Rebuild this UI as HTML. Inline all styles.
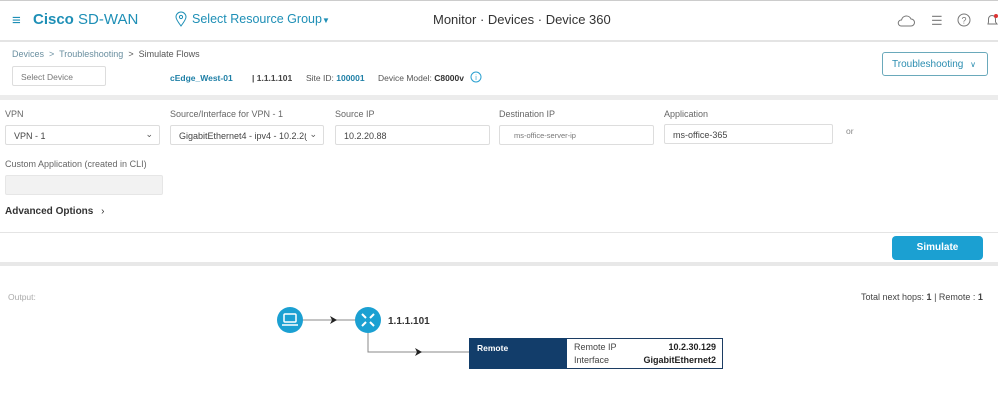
<!DOCTYPE html>
<html><head><style>
*{box-sizing:border-box;margin:0;padding:0}
body{width:998px;height:410px;background:#fff;font-family:"Liberation Sans",sans-serif;position:relative;overflow:hidden;color:#333}
.a{position:absolute;white-space:nowrap}
.lbl{font-size:9px;color:#666}
.inp{position:absolute;height:20px;border:1px solid #ddd;border-radius:2px;font-size:9px;color:#444;padding:5px 8px;background:#fff}
.chev{position:absolute;right:6px;top:3px;font-size:9px;color:#555}
</style></head><body>
<div class="a" style="left:0;top:0;width:998px;height:1px;background:#ccc"></div>
<div class="a" style="left:12px;top:12px;font-size:15px;color:#1e8fb6">≡</div>
<div class="a" style="left:33px;top:11px;font-size:15px;color:#1e8fb6"><b>Cisco</b> SD-WAN</div>
<svg class="a" style="left:175px;top:11px" width="12" height="16" viewBox="0 0 12 16"><path d="M6 15C3 11 1 8 1 6a5 5 0 0 1 10 0c0 2-2 5-5 9z" fill="none" stroke="#1e8fb6" stroke-width="1"/><circle cx="6" cy="6" r="1.6" fill="none" stroke="#1e8fb6"/></svg>
<div class="a" style="left:192px;top:12px;font-size:12.5px;color:#1e8fb6">Select Resource Group<span style="font-size:8px">▼</span></div>
<div class="a" style="left:433px;top:12px;font-size:13px;color:#333">Monitor · Devices · Device 360</div>
<svg class="a" style="left:897px;top:14px" width="18" height="13" viewBox="0 0 18 13"><path d="M4 12h10a3.5 3.5 0 0 0 0-7 5 5 0 0 0-9.5 1A3 3 0 0 0 4 12z" fill="none" stroke="#777" stroke-width="1"/></svg>
<div class="a" style="left:931px;top:13px;font-size:13px;color:#888">☰</div>
<svg class="a" style="left:957px;top:13px" width="14" height="14"><circle cx="7" cy="7" r="6" fill="none" stroke="#777"/><text x="7" y="10.5" font-size="9" text-anchor="middle" fill="#777" font-family="Liberation Sans">?</text></svg>
<svg class="a" style="left:986px;top:13px" width="12" height="15"><path d="M2 11h9L9.5 9V6a3.5 3.5 0 0 0-7 0v3z" fill="none" stroke="#777"/><circle cx="10" cy="3" r="2" fill="#d33"/></svg>
<div class="a" style="left:0;top:40px;width:998px;height:2px;background:#e4e4e4"></div>
<div class="a" style="left:12px;top:49px;font-size:9px;color:#6a8fa0">Devices &nbsp;&gt;&nbsp; Troubleshooting &nbsp;<span style="color:#555">&gt;&nbsp; Simulate Flows</span></div>
<div class="inp" style="left:12px;top:66px;width:94px;font-size:8.5px;color:#777">Select Device</div>
<div class="a" style="left:170px;top:73px;font-size:8.5px;color:#1e7fa6;font-weight:bold">cEdge_West-01</div>
<div class="a" style="left:252px;top:73px;font-size:8.5px;color:#444"><b>| 1.1.1.101</b></div>
<div class="a" style="left:306px;top:73px;font-size:8.5px;color:#555">Site ID: <b style="color:#1e7fa6">100001</b></div>
<div class="a" style="left:378px;top:73px;font-size:8.5px;color:#555">Device Model: <b style="color:#333">C8000v</b></div>
<svg class="a" style="left:470px;top:71px" width="12" height="12"><circle cx="6" cy="6" r="5" fill="none" stroke="#2aa0d0"/><text x="6" y="9" font-size="7" text-anchor="middle" fill="#2aa0d0" font-family="Liberation Sans">i</text></svg>
<div class="a" style="left:882px;top:52px;width:106px;height:24px;border:1px solid #6aa9bb;border-radius:3px;font-size:10px;color:#2b8db0;padding:6px 9px">Troubleshooting <span style="margin-left:4px;font-size:8px">∨</span></div>
<div class="a" style="left:0;top:95px;width:998px;height:5px;background:#ececec"></div>
<div class="a lbl" style="left:5px;top:109px">VPN</div>
<div class="a lbl" style="left:170px;top:109px">Source/Interface for VPN - 1</div>
<div class="a lbl" style="left:335px;top:109px">Source IP</div>
<div class="a lbl" style="left:499px;top:109px">Destination IP</div>
<div class="a lbl" style="left:664px;top:109px">Application</div>
<div class="inp" style="left:5px;top:125px;width:155px">VPN - 1<span class="chev">⌄</span></div>
<div class="inp" style="left:170px;top:125px;width:154px;overflow:hidden">GigabitEthernet4 - ipv4 - 10.2.2(<span class="chev" style="background:#fff;padding-left:3px">⌄</span></div>
<div class="inp" style="left:335px;top:125px;width:155px">10.2.20.88</div>
<div class="inp" style="left:499px;top:125px;width:155px;font-size:7.5px;color:#777;padding-left:14px">ms-office-server-ip</div>
<div class="inp" style="left:664px;top:124px;width:169px">ms-office-365</div>
<div class="a" style="left:846px;top:126px;font-size:8.5px;color:#888">or</div>
<div class="a lbl" style="left:5px;top:159px">Custom Application (created in CLI)</div>
<div class="inp" style="left:5px;top:175px;width:158px;background:#f2f2f2;border-color:#e6e6e6"></div>
<div class="a" style="left:5px;top:206px;font-size:10px;font-weight:bold;color:#333">Advanced Options <span style="font-weight:normal;margin-left:5px">›</span></div>
<div class="a" style="left:0;top:232px;width:998px;height:1px;background:#e4e4e4"></div>
<div class="a" style="left:892px;top:236px;width:91px;height:24px;background:#1ba0d2;border-radius:4px;color:#fff;font-size:10px;font-weight:bold;text-align:center;line-height:24px">Simulate</div>
<div class="a" style="left:0;top:262px;width:998px;height:4px;background:#e8e8e8"></div>
<div class="a" style="left:8px;top:292px;font-size:8.5px;color:#aaa">Output:</div>
<div class="a" style="left:861px;top:292px;font-size:9px;color:#444">Total next hops: <b>1</b> | Remote : <b>1</b></div>
<svg class="a" style="left:270px;top:300px" width="460" height="75">
<line x1="20" y1="20" x2="90" y2="20" stroke="#888"/>
<path d="M60 16l7 4-7 4 2-4z" fill="#222"/>
<circle cx="20" cy="20" r="13" fill="#1ba0d2"/>
<rect x="14" y="14" width="12" height="8" rx="1" fill="none" stroke="#fff" stroke-width="1.5"/>
<line x1="12" y1="25" x2="28" y2="25" stroke="#fff" stroke-width="1.5"/>
<circle cx="98" cy="20" r="13" fill="#1ba0d2"/>
<path d="M92 14l4 4M104 14l-4 4M92 26l4-4M104 26l-4-4" stroke="#fff" stroke-width="2"/>
<polyline points="98,33 98,52 200,52" fill="none" stroke="#888"/>
<path d="M145 48l7 4-7 4 2-4z" fill="#222"/>
<text x="118" y="24" font-size="10" font-weight="bold" fill="#333" font-family="Liberation Sans">1.1.1.101</text>
</svg>
<div class="a" style="left:469px;top:338px;width:254px;height:31px;border:1px solid #1c3d63;background:#fff"></div>
<div class="a" style="left:469px;top:338px;width:98px;height:31px;background:#123d6a"></div>
<div class="a" style="left:477px;top:343px;font-size:8.5px;font-weight:bold;color:#fff">Remote</div>
<div class="a" style="left:574px;top:342px;font-size:9px;color:#444">Remote IP</div>
<div class="a" style="left:574px;top:355px;font-size:9px;color:#444">Interface</div>
<div class="a" style="right:282px;top:342px;font-size:9px;font-weight:bold;color:#222">10.2.30.129</div>
<div class="a" style="right:282px;top:355px;font-size:9px;font-weight:bold;color:#222">GigabitEthernet2</div>
</body></html>
